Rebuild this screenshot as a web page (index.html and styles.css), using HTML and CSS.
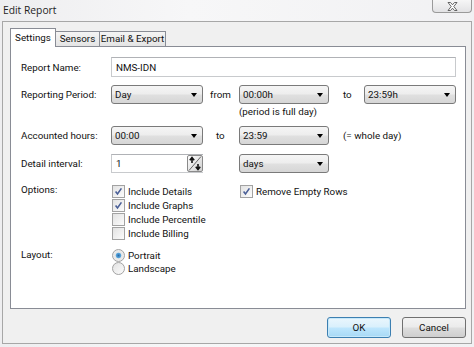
FILE: index.html
```html
<!DOCTYPE html>
<html lang="en">
<head>
  <meta charset="UTF-8">
  <title>Edit Report</title>
  <link rel="stylesheet" href="styles.css">
</head>
<body>
  <div class="window">
    <!-- title bar -->
    <div class="titlebar">
      <span class="title">Edit Report</span>
      <span class="close">
        <svg width="11" height="9" viewBox="0 0 11 9">
          <path d="M1 0.5h2.5l2 2.3 2-2.3h2.5l-3.2 4 3.2 4h-2.5l-2-2.3-2 2.3h-2.5l3.2-4z" fill="#fff" stroke="#555" stroke-width="0.9" stroke-linejoin="round"/>
        </svg>
      </span>
    </div>

    <div class="frame">
      <div class="tabs">
        <span class="tab active">Settings</span>
        <span class="tab">Sensors</span>
        <span class="tab">Email &amp; Export</span>
      </div>

      <div class="panel">
        <div class="row r-name">
          <span class="label">Report Name:</span>
          <span class="edit name">NMS-IDN</span>
        </div>

        <div class="row r-period">
          <span class="label">Reporting Period:</span>
          <span class="combo w92">Day</span>
          <span class="word w36 p7">from</span>
          <span class="combo w90">00:00h</span>
          <span class="word w35 p14">to</span>
          <span class="combo w92">23:59h</span>
        </div>
        <div class="note">(period is full day)</div>

        <div class="row r-hours">
          <span class="label">Accounted hours:</span>
          <span class="combo w92">00:00</span>
          <span class="word w36 p13">to</span>
          <span class="combo w90">23:59</span>
          <span class="word p14">(= whole day)</span>
        </div>

        <div class="row r-interval">
          <span class="label">Detail interval:</span>
          <span class="edit spin">
            <span>1</span>
            <svg class="spinbtn" width="16" height="17" viewBox="0 0 16 17">
              <defs>
                <linearGradient id="sg" x1="0" y1="0" x2="1" y2="1">
                  <stop offset="0" stop-color="#ffffff"/>
                  <stop offset="1" stop-color="#cfcfcf"/>
                </linearGradient>
              </defs>
              <rect x="0.5" y="0.5" width="15" height="16" rx="1.5" fill="url(#sg)" stroke="#8a8a8a"/>
              <path d="M2 15.5L14 1.5" stroke="#666" stroke-width="1"/>
              <path d="M5 8V3M2.8 5.2L5 2.6 7.2 5.2" stroke="#111" stroke-width="1.6" fill="none"/>
              <path d="M11 9v5M8.8 11.8L11 14.4 13.2 11.8" stroke="#111" stroke-width="1.6" fill="none"/>
            </svg>
          </span>
          <span class="gap36"></span>
          <span class="combo w90">days</span>
        </div>

        <div class="block r-options">
          <span class="label">Options:</span>
          <div class="checks">
            <label class="check on">Include Details</label>
            <label class="check on">Include Graphs</label>
            <label class="check">Include Percentile</label>
            <label class="check">Include Billing</label>
          </div>
          <div class="checks">
            <label class="check on">Remove Empty Rows</label>
          </div>
        </div>

        <div class="block r-layout">
          <span class="label">Layout:</span>
          <div class="checks">
            <label class="radio on">Portrait</label>
            <label class="radio">Landscape</label>
          </div>
        </div>
      </div>

      <div class="footer">
        <button class="btn default">OK</button>
        <button class="btn">Cancel</button>
      </div>
    </div>
  </div>
</body>
</html>
```

FILE: styles.css
```css
/* basic window colours */
html {
  --frame: #a7a7a7;
  --tab-line: #898c95;
  --face: #f0f0f0;
}
* { box-sizing: border-box; }
body {
  margin: 0;
  background: #f4f4f5;
  font-family: Roboto, "Liberation Sans", Arial, sans-serif;
  font-size: 9.8px;
  color: #111;
}

.window {
  width: 474px;
  height: 347px;
  overflow: hidden;
  background: linear-gradient(90deg, #eeeef0 0%, #f7f7f8 40%, #f1f1f3 100%);
}

/* title bar */
.titlebar {
  height: 21px;
  display: flex;
  align-items: flex-start;
}
.title {
  font-family: "Open Sans", "Liberation Sans", sans-serif;
  font-size: 10.3px;
  color: #1e1e1e;
  padding: 2px 0 0 3px;
  line-height: 16px;
}
.close {
  margin-left: auto;
  margin-right: 2px;
  width: 40px;
  height: 13px;
  border: 1px solid #9a9a9a;
  border-top: none;
  border-radius: 0 0 4px 4px;
  background: linear-gradient(#f6f6f6, #e2e2e4);
  display: flex;
  justify-content: center;
  align-items: center;
}

/* dialog body */
.frame {
  margin-left: 2px;
  width: 470px;
  height: 323px;
  border: 1px solid var(--frame);
  background: var(--face);
  padding: 6px 0 0 7px;
}

.tabs {
  display: flex;
  align-items: flex-end;
  height: 18px;
}
.tab {
  height: 15px;
  line-height: 14px;
  padding: 0;
  text-align: center;
  border: 1px solid var(--tab-line);
  border-bottom: none;
  margin-left: -1px;
  white-space: nowrap;
  background: linear-gradient(#f4f4f4, #e4e4e4);
}
.tab.active {
  height: 19px;
  margin-bottom: -1px;
  margin-left: 0;
  line-height: 17px;
  background: #fff;
  position: relative;
  z-index: 1;
  width: 46px;
}
.tab:nth-child(2) { width: 45px; }
.tab:nth-child(3) { width: 67px; }

.panel {
  width: 456px;
  height: 263px;
  border: 1px solid var(--tab-line);
  background: #fff;
  padding: 10px 0 0 10px;
}

.row {
  display: flex;
  align-items: center;
  height: 19px;
}
.label { width: 90px; flex: none; }
.r-name { height: 20px; }
.r-period { margin-top: 8px; }
.r-hours { margin-top: 7px; }
.r-interval { margin-top: 9px; }

.note {
  height: 15px;
  line-height: 15px;
  padding-left: 218px;
}

.word { flex: none; }
.w36 { width: 36px; }
.w35 { width: 35px; }
.p7 { padding-left: 7px; }
.p13 { padding-left: 13px; }
.p14 { padding-left: 14px; }
.gap36 { width: 36px; flex: none; }

/* text fields */
.edit {
  height: 100%;
  border: 1px solid #c8cacd;
  border-top-color: #b0b2b6;
  padding-left: 4px;
  display: flex;
  align-items: center;
  background: #fff;
}
.edit.name { width: 345px; }
.edit.spin {
  width: 92px;
  justify-content: space-between;
  padding-right: 0;
  border-right: none;
}
.spinbtn { display: block; margin-top: -1px; }

/* drop-down boxes */
.combo {
  flex: none;
  height: 19px;
  border: 1px solid #7a7a7a;
  border-radius: 3px;
  background: linear-gradient(#f5f5f5 0%, #ededed 48%, #e0e0e0 52%, #d6d6d6 100%);
  padding-left: 3px;
  line-height: 17px;
  position: relative;
}
.combo::after {
  content: "";
  position: absolute;
  right: 5px;
  top: 7px;
  border-left: 3.5px solid transparent;
  border-right: 3.5px solid transparent;
  border-top: 4px solid #000;
}
.w92 { width: 92px; }
.w90 { width: 90px; }

/* check boxes and radio buttons */
.block {
  display: flex;
  align-items: flex-start;
}
.r-options { margin-top: 11px; }
.r-layout { margin-top: 9px; }
.block .label { line-height: 12px; }
.checks {
  display: flex;
  flex-direction: column;
  width: 128px;
  flex: none;
}
.check, .radio {
  height: 14px;
  display: flex;
  align-items: center;
  padding-left: 1px;
  white-space: nowrap;
}
.check::before, .radio::before {
  content: "";
  flex: none;
  width: 11px;
  height: 11px;
  margin-right: 3px;
  border: 1px solid #a2a2a2;
  background: linear-gradient(135deg, #e2e2e2, #fcfcfc);
}
.check.on::before {
  background:
    url("data:image/svg+xml;utf8,<svg xmlns='http://www.w3.org/2000/svg' width='9' height='9'><path d='M1.6 4.4l1.9 2.5L7.4 1.4' stroke='%234a5f97' stroke-width='1.6' fill='none'/></svg>") center no-repeat,
    linear-gradient(135deg, #e2e2e2, #fcfcfc);
}
.radio { height: 13px; }
.radio::before {
  border-radius: 50%;
}
.radio.on::before {
  background: radial-gradient(circle, #2a6aa8 0, #5aa7dd 2.3px, #e6e6e6 3.2px, #f4f4f4 100%);
}

/* footer buttons */
.footer {
  display: flex;
  justify-content: flex-end;
  gap: 11px;
  width: 456px;
  padding-top: 8px;
}
.btn {
  width: 64px;
  height: 21px;
  border: 1px solid #707070;
  border-radius: 3px;
  background: linear-gradient(#f3f3f3 0%, #ebebeb 48%, #dddddd 52%, #cfcfcf 100%);
  font-family: Roboto, "Liberation Sans", Arial, sans-serif;
  font-size: 9.8px;
  color: #111;
  padding: 0;
}
.btn.default {
  border-color: #3c7fb1;
  background: linear-gradient(#eaf6fd 0%, #d9f0fc 48%, #bee6fd 52%, #a7d9f5 100%);
  box-shadow: inset 0 0 0 1px #c6e8fa;
}
```
